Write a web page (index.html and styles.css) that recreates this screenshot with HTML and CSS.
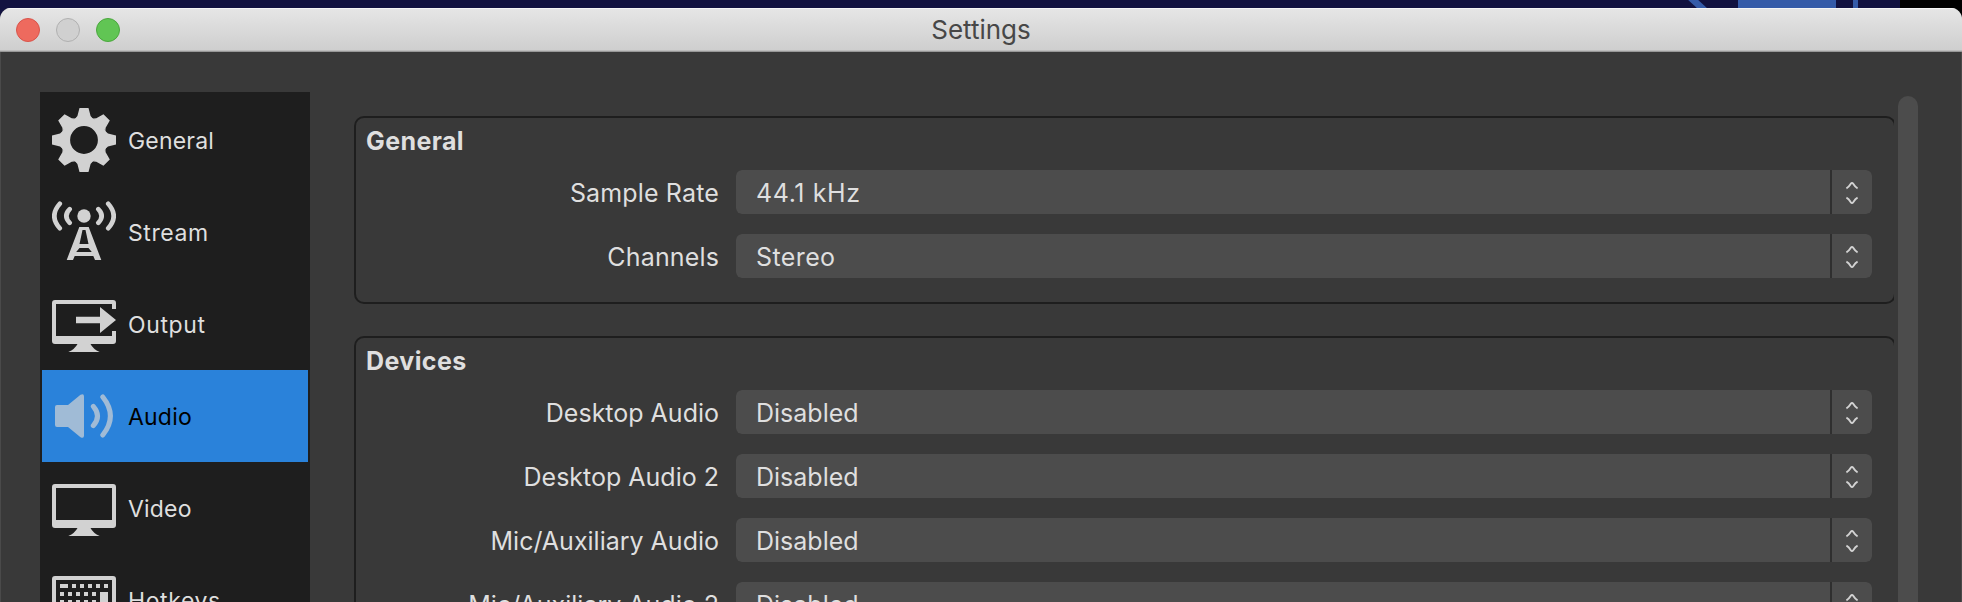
FILE: index.html
```html
<!DOCTYPE html>
<html lang="en">
<head>
<meta charset="utf-8">
<title>Settings</title>
<link rel="stylesheet" href="styles.css">
</head>
<body>
<svg class="desktop" viewBox="0 0 1962 20" aria-hidden="true">
  <rect width="1962" height="20" fill="#121240"/>
  <path d="M1686-2h10l12 11h-10z" fill="#355ba8"/>
  <rect x="1738" width="98" height="20" fill="#355ba8"/>
  <rect x="1853" width="5" height="20" fill="#355ba8"/>
  <rect x="1900" width="62" height="20" fill="#000"/>
</svg>
<svg class="defs" aria-hidden="true">
  <symbol id="updown" viewBox="0 0 14 24"><path d="M1.400 7.400Q3.600 6.400 5.800 2.800Q7 1 8.200 2.800Q10.400 6.400 12.600 7.400M1.400 16.600Q3.600 17.600 5.800 21.200Q7 23 8.200 21.200Q10.400 17.600 12.600 16.600" fill="none" stroke="#d2d2d2" stroke-width="1.900"/></symbol>
  <symbol id="monitor" viewBox="0 0 64 64"><path fill-rule="evenodd" d="M3 8H61Q64 8 64 11V49Q64 52 61 52H38.500Q41 57 47.700 60H16.300Q23 57 25.500 52H3Q0 52 0 49V11Q0 8 3 8ZM4 12V44H60V12Z"/></symbol>
</svg>
<div class="window">
  <header class="titlebar">
    <div class="lights"><i class="light close"></i><i class="light minimize"></i><i class="light zoom"></i></div>
    <h1 class="title"><span>Settings</span></h1>
  </header>
  <div class="content">
    <nav class="sidebar">
      <a class="item"><svg class="icon" viewBox="0 0 64 64"><g transform="translate(32 32)"><circle r="18.700" fill="none" stroke="#d2d2d2" stroke-width="9.600"/><g id="teeth"><path id="tooth" d="M-4.500-32H4.500L6.600-24L8.300-22H-8.300L-6.600-24Z"/><use href="#tooth" transform="rotate(90)"/><use href="#tooth" transform="rotate(180)"/><use href="#tooth" transform="rotate(270)"/></g><use href="#teeth" transform="rotate(45)"/></g></svg><span>General</span></a>
      <a class="item wide"><svg class="icon" viewBox="0 0 64 64"><circle cx="32" cy="16" r="6.700"/><path d="M7.800 3.700Q-3.200 16 7.800 28.300M17.700 9.200Q11 16 17.700 22.800M56.200 3.700Q67.200 16 56.200 28.300M46.300 9.200Q53 16 46.300 22.800" fill="none" stroke="#d2d2d2" stroke-width="4.600" stroke-linecap="round"/><path fill-rule="evenodd" d="M27.300 27H36.700L49.300 60H43L41.300 56H22.700L21 60H14.700ZM30.500 30L27.500 44H36.500L33.500 30ZM27.500 48L24.200 52H39.800L36.500 48Z"/></svg><span>Stream</span></a>
      <a class="item wide"><svg class="icon" viewBox="0 0 64 64"><path d="M3 8H61Q64 8 64 11V17H60V12H4V44H60V39H64V49Q64 52 61 52H38.500Q41 57 47.700 60H16.300Q23 57 25.500 52H3Q0 52 0 49V11Q0 8 3 8ZM24 24.700H48V15L64 28L48 41V31.300H24Z"/></svg><span>Output</span></a>
      <a class="item selected"><svg class="icon" viewBox="0 0 64 64"><path d="M5 21H16L28.500 10.800Q32 9 32 12.500V51.500Q32 55 28.500 53.200L16 43H5Q3 43 3 41V23Q3 21 5 21Z"/><path d="M41.300 22.300Q49.700 32 41.300 41.700M50.800 13Q66 32 50.800 51" fill="none" stroke="#a0bbd6" stroke-width="5" stroke-linecap="round"/></svg><span>Audio</span></a>
      <a class="item"><svg class="icon" viewBox="0 0 64 64"><use href="#monitor"/></svg><span>Video</span></a>
      <a class="item wide"><svg class="icon" viewBox="0 0 64 64"><path fill-rule="evenodd" d="M3 8H61Q64 8 64 11V53Q64 56 61 56H3Q0 56 0 53V11Q0 8 3 8ZM4 12V52H60V12Z"/><path d="M8 16h8v4h-8zM20 16h4v4h-4zM28 16h4v4h-4zM36 16h4v4h-4zM44 16h4v4h-4zM52 16h4v4h-4zM8 24h4v4h-4zM16 24h4v4h-4zM24 24h4v4h-4zM32 24h4v4h-4zM40 24h4v4h-4zM48 24h8v12h-8zM8 32h4v4h-4zM16 32h4v4h-4zM24 32h4v4h-4zM32 32h4v4h-4zM40 32h4v4h-4z"/></svg><span>Hotkeys</span></a>
    </nav>
    <main class="panel">
      <section class="group">
        <h2 class="heading"><span>General</span></h2>
        <div class="row"><label class="loose"><span>Sample Rate</span></label><div class="combo"><div class="value rate"><span>44.1 kHz</span></div><div class="arrows"><svg><use href="#updown"/></svg></div></div></div>
        <div class="row"><label class="loose"><span>Channels</span></label><div class="combo"><div class="value stereo"><span>Stereo</span></div><div class="arrows"><svg><use href="#updown"/></svg></div></div></div>
      </section>
      <section class="group">
        <h2 class="heading"><span>Devices</span></h2>
        <div class="row"><label><span>Desktop Audio</span></label><div class="combo"><div class="value"><span>Disabled</span></div><div class="arrows"><svg><use href="#updown"/></svg></div></div></div>
        <div class="row"><label><span>Desktop Audio 2</span></label><div class="combo"><div class="value"><span>Disabled</span></div><div class="arrows"><svg><use href="#updown"/></svg></div></div></div>
        <div class="row"><label><span>Mic/Auxiliary Audio</span></label><div class="combo"><div class="value"><span>Disabled</span></div><div class="arrows"><svg><use href="#updown"/></svg></div></div></div>
        <div class="row"><label><span>Mic/Auxiliary Audio 2</span></label><div class="combo"><div class="value"><span>Disabled</span></div><div class="arrows"><svg><use href="#updown"/></svg></div></div></div>
      </section>
    </main>
    <div class="scrollbar"></div>
  </div>
</div>
</body>
</html>
```
FILE: styles.css
```css
* { box-sizing: border-box; }

body {
  margin: 0;
  height: 602px;
  overflow: hidden;
  background: #121240;
  font-family: Inter, "Liberation Sans", sans-serif;
  font-size: 25px;
  color: #dfdfdf;
}

.desktop {
  display: block;
  width: 1962px;
  height: 20px;
  margin-bottom: -12px;
}

.defs { display: none; }

.window {
  position: relative;
  height: 594px;
  border-radius: 11px 11px 0 0;
  overflow: hidden;
  background: #393939;
}

.titlebar {
  display: grid;
  grid-template-columns: 1fr auto 1fr;
  align-items: center;
  height: 44px;
  padding: 0 16px;
  background: linear-gradient(#e6e6e6, #cecece);
  border-bottom: 1px solid #989898;
  box-shadow: inset 0 1px #f5f5f5, inset 0 -1px #bcbcbc;
}

.lights { display: flex; gap: 16px; }

.light {
  width: 24px;
  height: 24px;
  border: 1px solid;
  border-radius: 50%;
}

.close { background: #ee6a5e; border-color: #d8544b; }
.minimize { background: #d0d0d0; border-color: #b0b0b0; }
.zoom { background: #61c554; border-color: #4ba73e; }

.title {
  margin: 0;
  padding-top: 1px;
  font-size: 26px;
  font-weight: 400;
  line-height: 42px;
  color: #474747;
}

.content {
  display: flex;
  height: 550px;
  padding: 40px 43px 0 39px;
  border-left: 1px solid #4a4a4a;
  border-right: 1px solid #4a4a4a;
}

.sidebar {
  flex: none;
  width: 270px;
  padding: 2px;
  background: #1e1e1e;
  overflow: hidden;
}

.item {
  display: flex;
  align-items: center;
  gap: 12px;
  height: 92px;
  padding-left: 10px;
  font-size: 23px;
  letter-spacing: 0.2px;
}

.item.wide { letter-spacing: 0.6px; }
.item span { padding-top: 2px; }
.item.selected { background: #2a82da; color: #000; }

.icon { width: 64px; height: 64px; fill: #d2d2d2; }
.selected .icon { fill: #a0bbd6; }

.panel {
  flex: none;
  width: 1540px;
  margin-left: 44px;
  padding-top: 24px;
  overflow: hidden;
}

.group {
  width: 1542px;
  height: 188px;
  margin-bottom: 32px;
  padding: 0 22px 0 10px;
  border: 2px solid #1e1e1e;
  border-radius: 10px;
}

.group + .group { height: 400px; }

.heading {
  margin: 0;
  height: 52px;
  font-size: 25px;
  font-weight: 700;
  line-height: 46px;
  letter-spacing: 0.4px;
}

.row {
  display: flex;
  justify-content: space-between;
  height: 44px;
  margin-bottom: 20px;
}

label {
  width: 353px;
  margin-right: 1px;
  text-align: right;
  line-height: 47px;
  white-space: nowrap;
}

.loose { letter-spacing: 0.15px; }

.combo {
  display: flex;
  gap: 2px;
  width: 1136px;
  border-radius: 6px;
  overflow: hidden;
  background: #2f2f2f;
}

.value {
  flex: 1;
  padding-left: 20px;
  line-height: 47px;
  background: #4c4c4c;
}

.rate { letter-spacing: 0.6px; }
.stereo { letter-spacing: 0.4px; }

.arrows {
  display: flex;
  align-items: center;
  justify-content: center;
  width: 40px;
  padding-top: 2px;
  background: #4c4c4c;
}

.arrows svg { width: 14px; height: 24px; }

.scrollbar {
  flex: none;
  width: 20px;
  height: 600px;
  margin: 4px 0 0 4px;
  border-radius: 10px;
  background: #4c4c4c;
}
```
